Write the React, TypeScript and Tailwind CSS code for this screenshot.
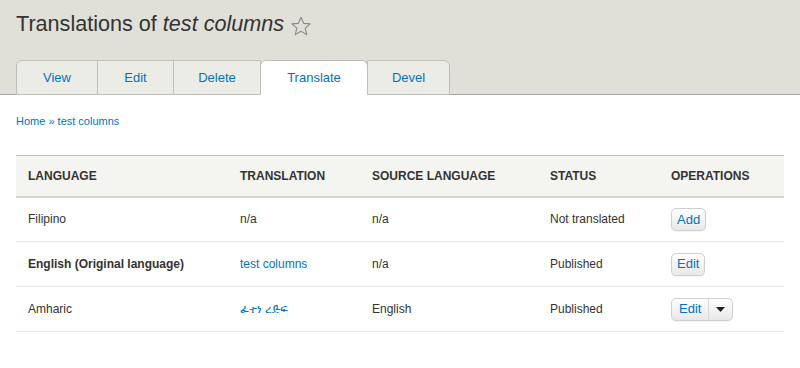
import React from "react";

const font = { fontFamily: '"Liberation Sans", Arial, sans-serif' };

function Star() {
  return (
    <svg width="22" height="22" viewBox="0 0 24 24" className="ml-[6px] inline-block">
      <path
        d="M12 2.5l2.9 6.6 7.1.6-5.4 4.7 1.6 7-6.2-3.7-6.2 3.7 1.6-7L2 9.7l7.1-.6z"
        fill="none"
        stroke="#8a8a80"
        strokeWidth="1.2"
        strokeLinejoin="round"
      />
    </svg>
  );
}

const tabs = [
  { label: "View", w: "w-[82px]" },
  { label: "Edit", w: "w-[77px]" },
  { label: "Delete", w: "w-[88px]" },
  { label: "Translate", w: "w-[108px]", active: true },
  { label: "Devel", w: "w-[83px]" },
];

function Button({ label, split }: { label: string; split?: boolean }) {
  return (
    <span className="inline-flex h-[23px] items-stretch rounded-[5px] border border-[#cfcfcf] bg-gradient-to-b from-[#fefefe] to-[#e8e8e8] text-[13px] text-[#0074bd] shadow-[0_1px_1px_rgba(0,0,0,0.05)]">
      <span className={"flex items-center " + (split ? "px-[7px]" : "px-[5px]")}>{label}</span>
      {split && (
        <span className="flex w-[24px] items-center justify-center border-l border-[#d8d8d8]">
          <svg width="9" height="5" viewBox="0 0 9 5">
            <path d="M0 0h9L4.5 5z" fill="#222" />
          </svg>
        </span>
      )}
    </span>
  );
}

const rows = [
  { lang: "Filipino", bold: false, tr: "n/a", trLink: false, src: "n/a", status: "Not translated", op: "Add", split: false },
  { lang: "English (Original language)", bold: true, tr: "test columns", trLink: true, src: "n/a", status: "Published", op: "Edit", split: false },
  { lang: "Amharic", bold: false, tr: "ፈተነ ረድፍ", trLink: true, src: "English", status: "Published", op: "Edit", split: true },
];

export default function App() {
  return (
    <div className="h-[368px] w-[800px] bg-white text-[#333]" style={font}>
      <div className="border-b border-[#a6a6a6] bg-[#e0e0d8] px-4">
        <h1 className="flex h-[60px] items-start pt-[10px] text-[21.6px] font-normal leading-[28px] text-[#333]">
          <span>
            Translations of <em>test columns</em>
          </span>
          <span className="mt-[1px]">
            <Star />
          </span>
        </h1>
        <ul className="flex h-[34px] items-end">
          {tabs.map((t, i) => (
            <li
              key={t.label}
              className={
                t.w +
                " -mb-px flex h-[35px] items-center justify-center border border-[#bfbfba] pt-[1px] text-[13px] text-[#0074bd] " +
                (i > 0 ? "-ml-px " : "") +
                (t.active
                  ? "rounded-t-[6px] border-b-white bg-white"
                  : "bg-[#ecece6] " + (i === 0 ? "rounded-tl-[6px]" : "") + (i === tabs.length - 1 ? "rounded-tr-[6px]" : ""))
              }
            >
              {t.label}
            </li>
          ))}
        </ul>
      </div>

      <div className="px-4">
        <div className="pt-[19px] text-[11px] leading-[14px] text-[#0074bd]">Home » test columns</div>

        <table className="mt-[27px] w-full border-collapse text-[12px]">
          <thead>
            <tr className="h-[41px] border-t border-b-2 border-t-[#bebfb9] border-b-[#d5d5d0] bg-[#f4f4f0] text-left text-[12px] font-bold uppercase text-[#333]">
              <th className="w-[224px] pl-3 font-bold">Language</th>
              <th className="w-[132px] font-bold">Translation</th>
              <th className="w-[178px] font-bold">Source language</th>
              <th className="w-[121px] font-bold">Status</th>
              <th className="font-bold">Operations</th>
            </tr>
          </thead>
          <tbody>
            {rows.map((r) => (
              <tr key={r.lang} className="h-[45px] border-b border-[#e6e6e6]">
                <td className={"pl-3 " + (r.bold ? "font-bold" : "")}>{r.lang}</td>
                <td className={r.trLink ? "text-[#0074bd]" : ""}>{r.tr}</td>
                <td>{r.src}</td>
                <td>{r.status}</td>
                <td>
                  <Button label={r.op} split={r.split} />
                </td>
              </tr>
            ))}
          </tbody>
        </table>
      </div>
    </div>
  );
}
